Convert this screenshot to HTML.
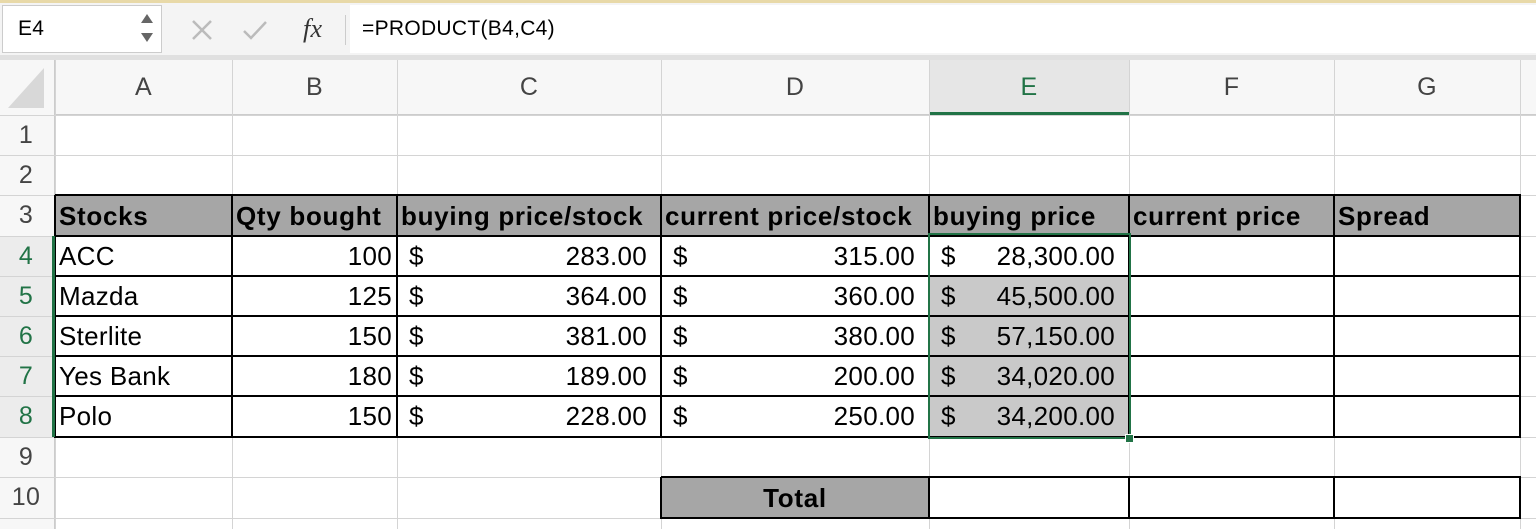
<!DOCTYPE html><html><head><style>
body{margin:0;width:1536px;height:529px;overflow:hidden;background:#fff;font-family:"Liberation Sans",sans-serif;position:relative}
.a{position:absolute;box-sizing:border-box}
.t{position:absolute;font-size:26px;letter-spacing:0.3px;color:#000;display:flex;align-items:center;box-sizing:border-box;white-space:nowrap}
.b{font-weight:bold;letter-spacing:0.7px}
.h{color:#444;font-size:25px;justify-content:center}
</style></head><body>
<div class="a" style="left:0;top:0;width:1536px;height:3px;background:#e8d9a8"></div>
<div class="a" style="left:0;top:3px;width:1536px;height:54px;background:#f4f4f4"></div>
<div class="a" style="left:2px;top:5px;width:160px;height:48px;background:#fff;border:1px solid #ccc"></div>
<div class="t" style="left:18px;top:5px;height:48px;font-size:21px">E4</div>
<svg class="a" style="left:138px;top:12px" width="18" height="34"><path d="M9 2 L15 11 L3 11Z M3 21 L15 21 L9 30Z" fill="#666"/></svg>
<svg class="a" style="left:190px;top:18px" width="90" height="24"><path d="M3 3 L21 21 M21 3 L3 21" stroke="#bbb" stroke-width="2.5"/><path d="M54 13 L61 20 L76 4" stroke="#bbb" stroke-width="2.5" fill="none"/></svg>
<div class="t" style="left:303px;top:5px;height:48px;font-family:'Liberation Serif',serif;font-style:italic;font-size:26px;color:#333">fx</div>
<div class="a" style="left:345px;top:15px;width:1px;height:30px;background:#ccc"></div>
<div class="a" style="left:350px;top:5px;width:1186px;height:48px;background:#fff"></div>
<div class="t" style="left:362px;top:5px;height:48px;font-size:21px">=PRODUCT(B4,C4)</div>
<div class="a" style="left:0;top:55px;width:1536px;height:5px;background:#e0e0e0"></div>
<div class="a" style="left:0;top:60px;width:1536px;height:55px;background:#f7f7f7;border-bottom:1px solid #ccc"></div>
<div class="a" style="left:0;top:60px;width:55px;height:469px;background:#f7f7f7;border-right:1px solid #ccc"></div>
<div class="a" style="left:0;top:236px;width:55px;height:201px;background:#ececec"></div>
<svg class="a" style="left:6px;top:66px" width="40" height="44"><path d="M38 2 L38 42 L2 42Z" fill="#d8d8d8"/></svg>
<div class="a" style="left:929px;top:60px;width:200px;height:55px;background:#e6e6e6;border-bottom:3px solid #217346"></div>
<div id="g"></div>
<script>
var cx=[55,232,397,661,929,1129,1334,1520],ry=[115,155,195,236,276,316,356,396,437,477,518],L="ABCDEFG",h="";
for(var i=0;i<7;i++){h+='<div class="t h" style="left:'+cx[i]+'px;top:60px;width:'+(cx[i+1]-cx[i])+'px;height:55px;'+(i==4?'color:#217346':'')+'">'+L[i]+'</div>';}
for(var i=0;i<8;i++)h+='<div class="a" style="left:'+cx[i]+'px;top:60px;width:1px;height:469px;background:#d4d4d4"></div>';
for(var j=0;j<ry.length;j++)h+='<div class="a" style="left:0;top:'+ry[j]+'px;width:1536px;height:1px;background:#d4d4d4"></div>';
for(var j=0;j<10;j++){var s=j>=3&&j<=7;h+='<div class="t h" style="left:0;top:'+ry[j]+'px;width:52px;height:'+(ry[j+1]-ry[j])+'px;'+(s?'color:#217346':'')+'">'+(j+1)+'</div>';}
document.getElementById('g').innerHTML=h;
</script>
<div class="a" style="left:55px;top:195px;width:1466px;height:42px;background:#a6a6a6"></div>
<div class="a" style="left:929px;top:276px;width:200px;height:161px;background:#c9c9c9"></div>
<div class="a" style="left:661px;top:477px;width:268px;height:42px;background:#a6a6a6"></div>
<div id="bd"></div>
<script>
var h="";
function hl(x,y,w){h+='<div class="a" style="left:'+x+'px;top:'+(y-1)+'px;width:'+w+'px;height:2px;background:#000"></div>';}
function vl(x,y,hh){h+='<div class="a" style="left:'+(x-1)+'px;top:'+y+'px;width:2px;height:'+hh+'px;background:#000"></div>';}
[195,236,276,316,356,396,437].forEach(function(y){hl(55,y,1466)});
cx.forEach(function(x){vl(x,195,243)});
hl(661,477,860);hl(661,518,860);[661,929,1129,1334,1520].forEach(function(x){vl(x,477,42)});
var rows=[["ACC","100","283.00","315.00","28,300.00"],["Mazda","125","364.00","360.00","45,500.00"],["Sterlite","150","381.00","380.00","57,150.00"],["Yes Bank","180","189.00","200.00","34,020.00"],["Polo","150","228.00","250.00","34,200.00"]];
var hd=["Stocks","Qty bought","buying price/stock","current price/stock","buying price","current price","Spread"];
for(var i=0;i<7;i++)h+='<div class="t b" style="left:'+(cx[i]+4)+'px;top:195px;height:42px">'+hd[i]+'</div>';
rows.forEach(function(r,k){var y=ry[k+3],H=ry[k+4]-y;
h+='<div class="t" style="left:59px;top:'+y+'px;height:'+H+'px">'+r[0]+'</div>';
h+='<div class="t" style="left:232px;top:'+y+'px;height:'+H+'px;width:160px;justify-content:flex-end">'+r[1]+'</div>';
[[397,661,r[2]],[661,929,r[3]],[929,1129,r[4]]].forEach(function(c){
h+='<div class="t" style="left:'+(c[0]+12)+'px;top:'+y+'px;height:'+H+'px">$</div>';
h+='<div class="t" style="left:'+c[0]+'px;top:'+y+'px;height:'+H+'px;width:'+(c[1]-c[0]-14)+'px;justify-content:flex-end">'+c[2]+'</div>';});});
h+='<div class="t b" style="left:661px;top:477px;height:42px;width:268px;justify-content:center">Total</div>';
document.getElementById('bd').innerHTML=h;
</script>
<div class="a" style="left:928px;top:233px;width:203px;height:206px;border:2px solid #217346"></div>
<div class="a" style="left:1125px;top:434px;width:9px;height:9px;background:#217346;border:1px solid #fff"></div>
<div class="a" style="left:52px;top:236px;width:3px;height:201px;background:#217346"></div>
</body></html>
